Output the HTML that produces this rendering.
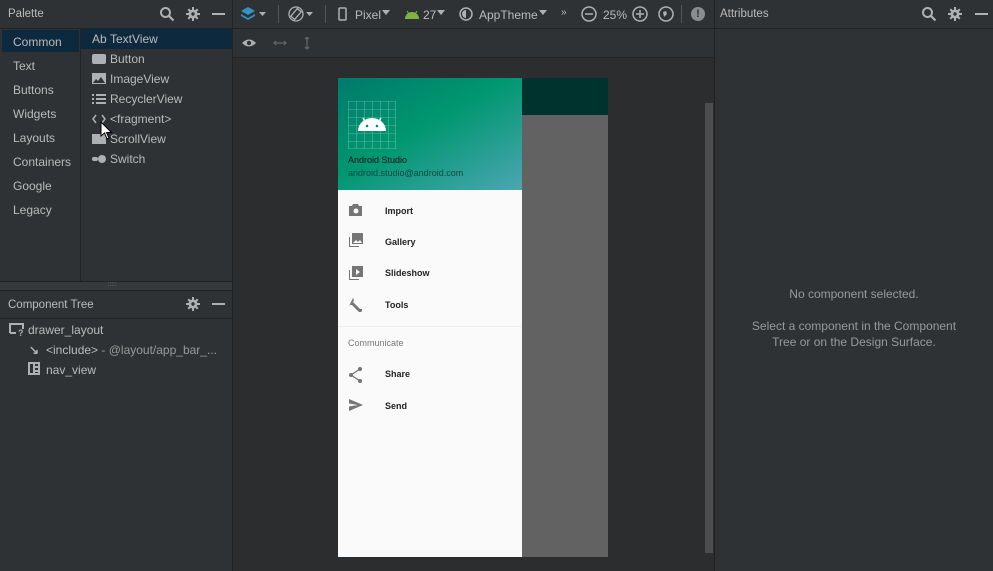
<!DOCTYPE html><html><head><style>
body{margin:0;width:993px;height:571px;background:#2f3234;font-family:"Liberation Sans",sans-serif;font-size:12px;color:#bbbbbb;position:relative;overflow:hidden}
.a{position:absolute}
.ic{position:absolute;fill:#aeb1b3}
.m{position:absolute;left:385px;font-size:9px;color:#222;font-weight:bold}
</style></head><body>
<div class="a" style="left:0;top:0;width:232px;height:28px;border-bottom:1px solid #222;"></div>
<div class="a" style="left:8px;top:8px;font-size:11.5px">Palette</div>
<svg class="ic" style="left:159px;top:6px" width="16" height="16"><circle cx="6.5" cy="6.5" r="4.5" stroke="#aeb1b3" stroke-width="2" fill="none"/><path d="M10 10l4.5 4.5" stroke="#aeb1b3" stroke-width="2.2"/></svg>
<svg class="ic" style="left:186px;top:7px" width="14" height="14"><circle cx="7" cy="7" r="4.5"/><path d="M6 0h2v14h-2zM0 6h14v2H0zM1.5 3l1.5-1.5 9.5 9.5-1.5 1.5zM11 1.5l1.5 1.5-9.5 9.5-1.5-1.5z"/><circle cx="7" cy="7" r="1.7" fill="#2f3234"/></svg>
<div class="a" style="left:212px;top:13px;width:13px;height:2px;background:#aeb1b3"></div>
<div class="a" style="left:232px;top:0;width:1px;height:571px;background:#222"></div>
<div class="a" style="left:80px;top:29px;width:1px;height:252px;background:#222"></div>
<div class="a" style="left:2px;top:30px;width:77px;height:22px;background:#0d293e"></div>
<div class="a" style="left:81px;top:29px;width:151px;height:20px;background:#0d293e"></div>
<div class="a" style="left:13px;top:30px;line-height:24px">Common<br>Text<br>Buttons<br>Widgets<br>Layouts<br>Containers<br>Google<br>Legacy</div>
<div class="a" style="left:110px;top:29px;line-height:20px">TextView<br>Button<br>ImageView<br>RecyclerView<br>&lt;fragment&gt;<br>ScrollView<br>Switch</div>
<div class="a" style="left:92px;top:32px;font-size:12px;line-height:14px">Ab</div>
<div class="a" style="left:92px;top:54px;width:14px;height:10px;background:#aeb1b3;border-radius:2px"></div>
<svg class="ic" style="left:92px;top:73px" width="14" height="11"><rect width="14" height="11"/><path d="M1 10l3-4 2 2 3-4 4 6z" fill="#2f3234"/></svg>
<svg class="ic" style="left:92px;top:94px" width="14" height="10"><rect y="0" width="2" height="2"/><rect y="4" width="2" height="2"/><rect y="8" width="2" height="2"/><rect x="4" y="0" width="10" height="2"/><rect x="4" y="4" width="10" height="2"/><rect x="4" y="8" width="10" height="2"/></svg>
<svg class="a" style="left:92px;top:114px" width="14" height="10"><path d="M4 1L1 5l3 4M10 1l3 4-3 4" stroke="#aeb1b3" stroke-width="1.5" fill="none"/></svg>
<div class="a" style="left:92px;top:134px;width:14px;height:10px;background:#aeb1b3"></div>
<svg class="ic" style="left:92px;top:154px" width="14" height="10"><rect x="0" y="3" width="6" height="4" rx="2"/><circle cx="10" cy="5" r="4"/></svg>
<svg class="a" style="left:100px;top:121px" width="14" height="20"><path d="M1 1v14l3.5-3 2.5 6 2-1-2.5-5.5h5z" fill="#fff" stroke="#000"/></svg>
<div class="a" style="left:0;top:281px;width:232px;height:8px;background:#36393b;border-top:1px solid #222;border-bottom:1px solid #222"></div>
<div class="a" style="left:108px;top:282px;font-size:6px;color:#888">::::: </div>
<div class="a" style="left:8px;top:299px;font-size:11.5px">Component Tree</div>
<svg class="ic" style="left:186px;top:297px" width="14" height="14"><circle cx="7" cy="7" r="4.5"/><path d="M6 0h2v14h-2zM0 6h14v2H0zM1.5 3l1.5-1.5 9.5 9.5-1.5 1.5zM11 1.5l1.5 1.5-9.5 9.5-1.5-1.5z"/><circle cx="7" cy="7" r="1.7" fill="#2f3234"/></svg>
<div class="a" style="left:212px;top:303px;width:13px;height:2px;background:#aeb1b3"></div>
<div class="a" style="left:0;top:318px;width:232px;height:1px;background:#222"></div>
<svg class="a" style="left:9px;top:323px" width="16" height="14"><path d="M1 10V1h13v5M1 10h6" stroke="#aeb1b3" stroke-width="2" fill="none"/><text x="9" y="13" font-size="9" fill="#aeb1b3" font-weight="bold">?</text></svg>
<div class="a" style="left:28px;top:323px">drawer_layout</div>
<div class="a" style="left:29px;top:343px;font-weight:bold;color:#aeb1b3">↘</div>
<div class="a" style="left:46px;top:343px">&lt;include&gt; <span style="color:#999">- @layout/app_bar_...</span></div>
<svg class="ic" style="left:28px;top:362px" width="12" height="13"><path d="M0 0h12v13H0zM2 2v9h3V2zM7 2v2h3V2zM7 6v2h3V6zM7 10v1h3v-1z" fill-rule="evenodd"/></svg>
<div class="a" style="left:46px;top:363px">nav_view</div>
<div class="a" style="left:233px;top:28px;width:481px;height:1px;background:#222"></div>
<div class="a" style="left:233px;top:57px;width:481px;height:1px;background:#222"></div>
<div class="a" style="left:233px;top:58px;width:481px;height:513px;background:#2b2d2f"></div>
<svg class="a" style="left:240px;top:6px" width="30" height="17"><path d="M8 1l7 4-7 4-7-4z" fill="#3592c4"/><path d="M1 8l7 4 7-4v2l-7 4-7-4z" fill="#3592c4"/><path d="M19 6h7l-3.5 4z" fill="#aeb1b3"/></svg>
<div class="a" style="left:278px;top:5px;width:1px;height:18px;background:#555"></div>
<svg class="a" style="left:288px;top:5px" width="30" height="18"><circle cx="8" cy="9" r="7" stroke="#aeb1b3" fill="none" stroke-width="1.3"/><rect x="5.5" y="4" width="5" height="10" transform="rotate(40 8 9)" stroke="#aeb1b3" fill="none" stroke-width="1.3"/><path d="M18 7h7l-3.5 4z" fill="#aeb1b3"/></svg>
<div class="a" style="left:325px;top:5px;width:1px;height:18px;background:#555"></div>
<svg class="a" style="left:338px;top:7px" width="10" height="15"><rect x="1" y="1" width="7" height="12" rx="1" stroke="#aeb1b3" fill="none" stroke-width="1.5"/></svg>
<div class="a" style="left:355px;top:8px">Pixel</div>
<svg class="a" style="left:382px;top:10px" width="10" height="6"><path d="M0 0h8l-4 5z" fill="#aeb1b3"/></svg>
<svg class="a" style="left:404px;top:8px" width="16" height="12"><path d="M1 11a7 7 0 0 1 14 0z" fill="#7fb241"/><path d="M3 3l2 3M13 3l-2 3" stroke="#7fb241"/></svg>
<div class="a" style="left:423px;top:8px">27</div>
<svg class="a" style="left:437px;top:10px" width="10" height="6"><path d="M0 0h8l-4 5z" fill="#aeb1b3"/></svg>
<svg class="a" style="left:459px;top:7px" width="15" height="15"><circle cx="7" cy="7" r="6" stroke="#aeb1b3" stroke-width="1.5" fill="none"/><path d="M7 3a4 4 0 0 0 0 8z" fill="#aeb1b3"/></svg>
<div class="a" style="left:479px;top:8px">AppTheme</div>
<svg class="a" style="left:539px;top:10px" width="10" height="6"><path d="M0 0h8l-4 5z" fill="#aeb1b3"/></svg>
<div class="a" style="left:561px;top:7px;font-size:10px">»</div>
<svg class="a" style="left:581px;top:6px" width="100" height="18"><circle cx="8" cy="8" r="7" stroke="#aeb1b3" stroke-width="1.5" fill="none"/><path d="M4 8h8" stroke="#aeb1b3" stroke-width="1.5"/><circle cx="59" cy="8" r="7" stroke="#aeb1b3" stroke-width="1.5" fill="none"/><path d="M55 8h8M59 4v8" stroke="#aeb1b3" stroke-width="1.5"/><circle cx="85" cy="8" r="7" stroke="#aeb1b3" stroke-width="1.5" fill="none"/><path d="M82 6l3 -1 0 0 1 3-3 3z" fill="#aeb1b3"/></svg>
<div class="a" style="left:603px;top:8px">25%</div>
<div class="a" style="left:681px;top:5px;width:1px;height:18px;background:#555"></div>
<div class="a" style="left:691px;top:7px;width:14px;height:14px;border-radius:50%;background:#8a8d8f;color:#2f3234;font-weight:bold;font-size:11px;text-align:center;line-height:14px">!</div>
<svg class="a" style="left:241px;top:37px" width="80" height="14"><path d="M1 6q7-7 14 0q-7 7-14 0z" fill="#aeb1b3"/><circle cx="8" cy="6" r="2.2" fill="#2f3234"/><path d="M33 6h12M35 4l-2 2 2 2M43 4l2 2-2 2" stroke="#666" fill="none" stroke-width="1.2"/><path d="M66 0v12M64 2l2-2 2 2M64 10l2 2 2-2" stroke="#666" fill="none" stroke-width="1.2"/></svg>
<div class="a" style="left:338px;top:78px;width:270px;height:479px;background:#626262"></div>
<div class="a" style="left:522px;top:78px;width:86px;height:37px;background:#00332e"></div>
<div class="a" style="left:338px;top:78px;width:184px;height:112px;background:linear-gradient(150deg,#007a6c 0%,#00976f 45%,#4ba6b3 100%)"></div>
<div class="a" style="left:338px;top:190px;width:184px;height:367px;background:#fafafa"></div>
<svg class="a" style="left:348px;top:101px" width="48" height="48"><g stroke="rgba(255,255,255,.35)" stroke-width="0.6"><path d="M0 .5h48M0 8.5h48M0 16.5h48M0 24.5h48M0 32.5h48M0 40.5h48M0 47.5h48M.5 0v48M8.5 0v48M16.5 0v48M24.5 0v48M32.5 0v48M40.5 0v48M47.5 0v48"/></g><path d="M10 30a14 13 0 0 1 28 0z" fill="#fff"/><path d="M15 17l3 5M33 17l-3 5" stroke="#fff" stroke-width="1.5"/><circle cx="19" cy="25" r="1.3" fill="#00897b"/><circle cx="29" cy="25" r="1.3" fill="#00897b"/></svg>
<div class="a" style="left:348px;top:155px;font-size:9px;color:#111">Android Studio</div>
<div class="a" style="left:348px;top:168px;font-size:9px;color:#0c4a42">android.studio@android.com</div>
<svg class="a" style="left:348px;top:203px" width="16" height="220" fill="#757575"><path d="M1 3h3l1-2h5l1 2h3v10H1z"/><circle cx="8" cy="8" r="2.5" fill="#fafafa"/><g transform="translate(0,8)"><path d="M4 33h11v-11H4zM1 26v10h10v-1H2v-9z"/><path d="M5 32l3-3 2 2 2-2 2 3z" fill="#fafafa"/></g><g transform="translate(0,9)"><path d="M4 65h11v-11H4zM1 58v10h10v-1H2v-9z"/><path d="M8 57v6l4-3z" fill="#fafafa"/></g><g transform="translate(0,15)"><path d="M2 87l3-3 7 7 2 0 0 2-1 1-2 0-7-7z"/><path d="M1 88l4-4a3 3 0 0 0 0-4z"/></g><circle cx="3" cy="172" r="2"/><circle cx="12" cy="166" r="2"/><circle cx="12" cy="178" r="2"/><path d="M3 172l9-6M3 172l9 6" stroke="#757575" stroke-width="1.3"/><path d="M1 196l14 6-14 6v-4.5l9-1.5-9-1.5z"/></svg>
<div class="m" style="top:206px">Import</div>
<div class="m" style="top:237px">Gallery</div>
<div class="m" style="top:268px">Slideshow</div>
<div class="m" style="top:300px">Tools</div>
<div class="a" style="left:338px;top:326px;width:184px;height:1px;background:#eee"></div>
<div class="a" style="left:348px;top:338px;font-size:9px;color:#777">Communicate</div>
<div class="m" style="top:369px">Share</div>
<div class="m" style="top:401px">Send</div>
<div class="a" style="left:705px;top:103px;width:8px;height:450px;background:#4b4d4f"></div>
<div class="a" style="left:714px;top:0;width:1px;height:571px;background:#222"></div>
<div class="a" style="left:715px;top:28px;width:278px;height:1px;background:#222"></div>
<div class="a" style="left:720px;top:8px;font-size:11.5px">Attributes</div>
<svg class="ic" style="left:921px;top:6px" width="16" height="16"><circle cx="6.5" cy="6.5" r="4.5" stroke="#aeb1b3" stroke-width="2" fill="none"/><path d="M10 10l4.5 4.5" stroke="#aeb1b3" stroke-width="2.2"/></svg>
<svg class="ic" style="left:948px;top:7px" width="14" height="14"><circle cx="7" cy="7" r="4.5"/><path d="M6 0h2v14h-2zM0 6h14v2H0zM1.5 3l1.5-1.5 9.5 9.5-1.5 1.5zM11 1.5l1.5 1.5-9.5 9.5-1.5-1.5z"/><circle cx="7" cy="7" r="1.7" fill="#2f3234"/></svg>
<div class="a" style="left:975px;top:13px;width:13px;height:2px;background:#aeb1b3"></div>
<div class="a" style="left:715px;top:286px;width:278px;text-align:center;line-height:16px;color:#999">No component selected.<br><br>Select a component in the Component<br>Tree or on the Design Surface.</div>
</body></html>
